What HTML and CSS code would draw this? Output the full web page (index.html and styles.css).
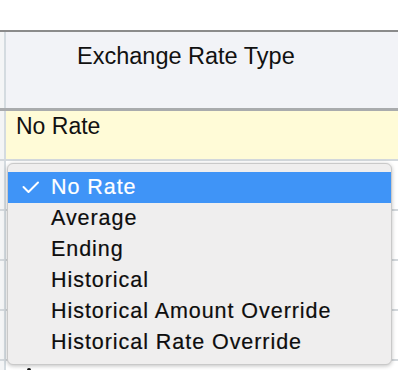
FILE: index.html
```html
<!DOCTYPE html>
<html>
<head>
<meta charset="utf-8">
<link rel="stylesheet" href="styles.css">
</head>
<body>
<div class="page">
  <div class="topspace"></div>
  <div class="header">
    <div class="gutter"></div>
    <div class="hcell">Exchange Rate Type</div>
  </div>
  <div class="row selected">
    <div class="gutter"></div>
    <div class="cell">No Rate</div>
  </div>
  <div class="row"><div class="gutter"></div><div class="cell"></div></div>
  <div class="row"><div class="gutter"></div><div class="cell"></div></div>
  <div class="row"><div class="gutter"></div><div class="cell"></div></div>
  <div class="row"><div class="gutter"></div><div class="cell"></div></div>
  <div class="row"><div class="gutter"></div><div class="cell"><div class="peek"></div></div></div>

  <div class="menu">
    <div class="item active">
      <svg class="check" width="18" height="14" viewBox="0 0 18 14"><path d="M1.5 6 L6.5 11 L16 1.5" fill="none" stroke="#fff" stroke-width="2" stroke-linecap="round" stroke-linejoin="round"/></svg>
      <span>No Rate</span>
    </div>
    <div class="item"><span>Average</span></div>
    <div class="item"><span>Ending</span></div>
    <div class="item"><span>Historical</span></div>
    <div class="item"><span>Historical Amount Override</span></div>
    <div class="item"><span>Historical Rate Override</span></div>
  </div>
</div>
</body>
</html>
```
FILE: styles.css
```css
html, body {
  margin: 0;
  padding: 0;
  background: #ffffff;
}
.page {
  position: relative;
  width: 398px;
  height: 370px;
  overflow: hidden;
  font-family: "Liberation Sans", Arial, sans-serif;
  color: #111;
}
.topspace {
  height: 30px;
  background: #fff;
}
.header {
  display: flex;
  height: 76px;
  border-top: 2px solid #8b8b8b;
  border-bottom: 3px solid #a9abad;
  background: #f2f3f7;
}
.gutter {
  width: 4px;
  flex: none;
  background: #f4f5f6;
  border-right: 2px solid #d4dbe0;
}
.hcell {
  flex: 1;
  padding: 11px 0 0 71px;
  font-size: 23.5px;
  line-height: 26px;
}
.row {
  display: flex;
  height: 48px;
  border-bottom: 2px solid #d3d8dc;
  background: #fff;
}
.row.selected .cell {
  background: #fffbd7;
}
.cell {
  flex: 1;
  padding: 2px 0 0 10px;
  font-size: 23px;
  line-height: 26px;
}
.peek {
  width: 4px;
  height: 3px;
  margin: 5px 0 0 11px;
  border-radius: 2px 2px 0 0;
  background: #111;
}
.menu {
  position: absolute;
  left: 7px;
  top: 163px;
  width: 383px;
  padding: 8px 0 6px;
  background: #efeeee;
  border: 1px solid #c9c9c9;
  border-radius: 6px;
  box-shadow: 0 1px 4px rgba(0,0,0,0.25);
}
.item {
  position: relative;
  height: 31px;
  line-height: 31px;
  padding-left: 43px;
  font-size: 21.5px;
  letter-spacing: 0.95px;
  color: #0d0d0d;
  -webkit-text-stroke: 0.2px #0d0d0d;
}
.item.active {
  background: #3f94f7;
  color: #fff;
  -webkit-text-stroke: 0.2px #fff;
}
.check {
  position: absolute;
  left: 14px;
  top: 9px;
}
```
